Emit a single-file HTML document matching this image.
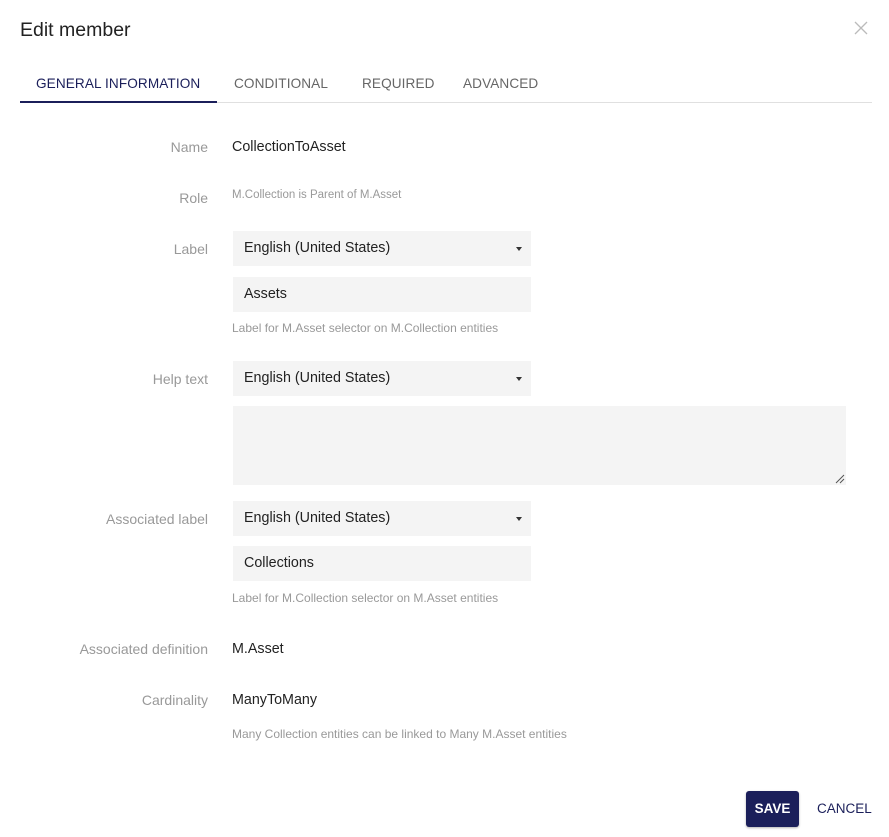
<!DOCTYPE html>
<html><head><style>
*{box-sizing:border-box;margin:0;padding:0}
body{width:889px;height:837px;background:#fff;font-family:"Liberation Sans",sans-serif;position:relative;overflow:hidden;color:#222}
.a{position:absolute;white-space:nowrap}
.lbl{position:absolute;right:681px;font-size:14px;color:#999;white-space:nowrap}
.val{position:absolute;left:232px;font-size:14.3px;color:#222}
.hint{position:absolute;left:232px;font-size:12px;color:#999;white-space:nowrap}
.box{position:absolute;left:233px;width:298px;height:35px;background:#f4f4f4;font-size:14.3px;padding:0 11px;line-height:35px;color:#222}
.sel:after{content:"";position:absolute;right:9px;top:16px;border-left:3px solid transparent;border-right:3px solid transparent;border-top:4px solid #333}
.tab{position:absolute;top:76px;font-size:13.6px;color:#666;letter-spacing:.1px}
</style></head><body>
<div class="a" style="left:20px;top:19px;font-size:19.5px;color:#222">Edit member</div>
<svg class="a" style="left:854px;top:21px" width="14" height="14"><path d="M1 1L13 13M13 1L1 13" stroke="#bbb" stroke-width="1.3"/></svg>
<div class="tab" style="left:36px;color:#1b1f5a">GENERAL INFORMATION</div>
<div class="tab" style="left:234px">CONDITIONAL</div>
<div class="tab" style="left:362px">REQUIRED</div>
<div class="tab" style="left:463px">ADVANCED</div>
<div class="a" style="left:20px;top:102px;width:852px;height:1px;background:#e0e0e0"></div>
<div class="a" style="left:20px;top:101px;width:197px;height:2px;background:#1b1f5a"></div>

<div class="lbl" style="top:139px">Name</div><div class="val" style="top:139px">CollectionToAsset</div>
<div class="lbl" style="top:190px">Role</div><div class="hint" style="top:189px;font-size:11.5px">M.Collection is Parent of M.Asset</div>
<div class="lbl" style="top:241px">Label</div>
<div class="box sel" style="top:231px">English (United States)</div>
<div class="box" style="top:277px">Assets</div>
<div class="hint" style="top:321px">Label for M.Asset selector on M.Collection entities</div>
<div class="lbl" style="top:371px">Help text</div>
<div class="box sel" style="top:361px">English (United States)</div>
<div class="box" style="top:406px;width:613px;height:79px"></div>
<svg class="a" style="left:835px;top:474px" width="10" height="10"><path d="M9 1L1 9M9 5L5 9" stroke="#555" stroke-width="1"/></svg>
<div class="lbl" style="top:511px">Associated label</div>
<div class="box sel" style="top:501px">English (United States)</div>
<div class="box" style="top:546px">Collections</div>
<div class="hint" style="top:591px">Label for M.Collection selector on M.Asset entities</div>
<div class="lbl" style="top:641px">Associated definition</div><div class="val" style="top:641px">M.Asset</div>
<div class="lbl" style="top:692px">Cardinality</div><div class="val" style="top:692px">ManyToMany</div>
<div class="hint" style="top:727px">Many Collection entities can be linked to Many M.Asset entities</div>

<div class="a" style="left:746px;top:791px;width:53px;height:36px;background:#1b1f5a;border-radius:3px;box-shadow:0 1px 2px rgba(0,0,0,.3);color:#fff;font-weight:bold;font-size:13.5px;text-align:center;line-height:36px">SAVE</div>
<div class="a" style="left:817px;top:801px;font-size:13.5px;color:#1b1f5a">CANCEL</div>
</body></html>
